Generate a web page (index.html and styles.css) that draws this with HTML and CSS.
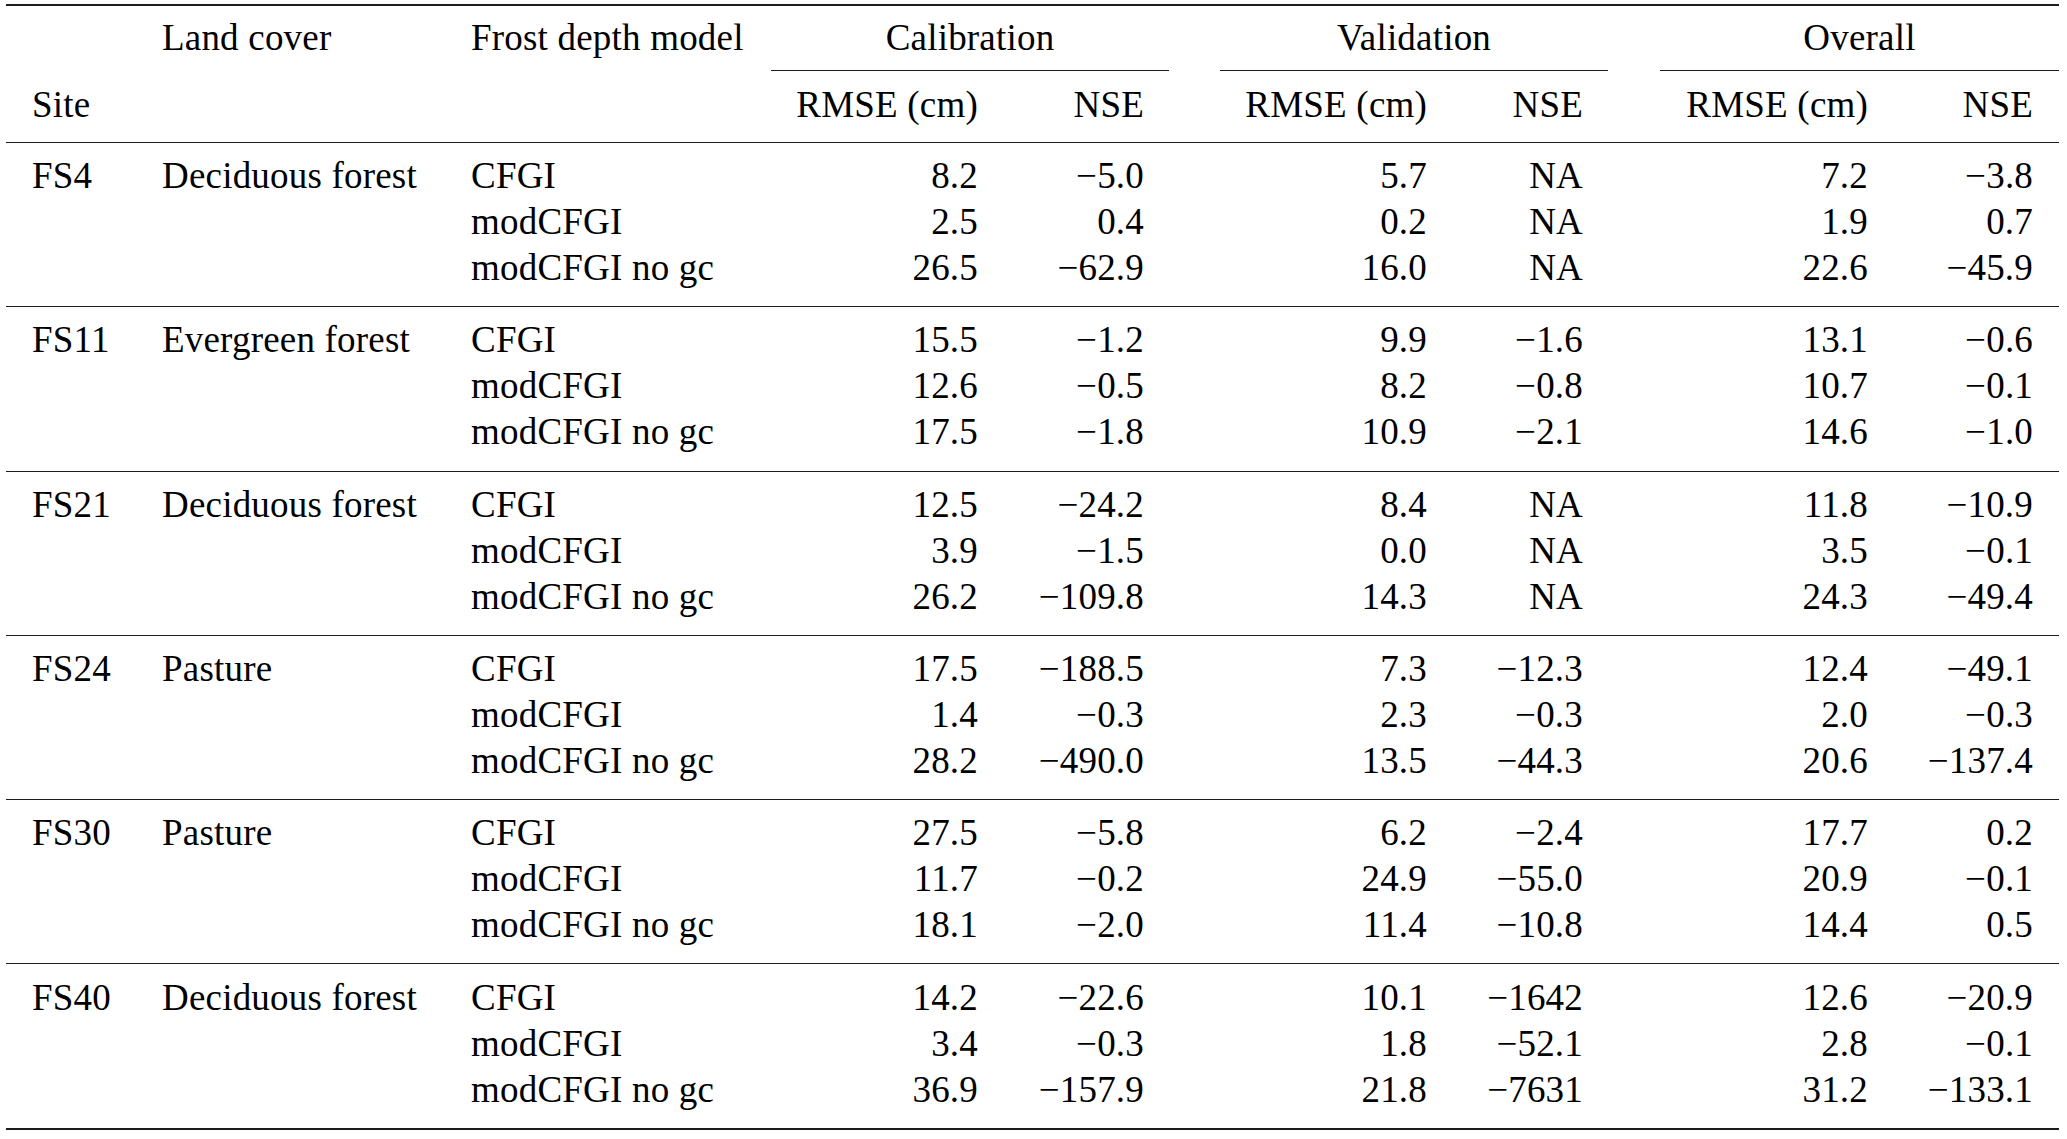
FILE: index.html
```html
<!DOCTYPE html>
<html lang="en">
<head>
<meta charset="utf-8">
<title>Frost depth model performance</title>
<link rel="stylesheet" href="styles.css">
</head>
<body>
<table class="results">
  <colgroup>
    <col class="c-site"><col class="c-land"><col class="c-model">
    <col class="c-cal-rmse"><col class="c-cal-nse">
    <col class="c-val-rmse"><col class="c-val-nse">
    <col class="c-all-rmse"><col class="c-all-nse">
  </colgroup>
  <thead>
    <tr class="head-top">
      <th class="txt"></th>
      <th class="txt">Land cover</th>
      <th class="txt">Frost depth model</th>
      <th class="span" colspan="2"><div class="spanner sp-cal">Calibration</div></th>
      <th class="span" colspan="2"><div class="spanner sp-val">Validation</div></th>
      <th class="span" colspan="2"><div class="spanner sp-all">Overall</div></th>
    </tr>
    <tr class="head-sub">
      <th class="txt">Site</th>
      <th class="txt"></th>
      <th class="txt"></th>
      <th class="num">RMSE (cm)</th>
      <th class="num">NSE</th>
      <th class="num">RMSE (cm)</th>
      <th class="num">NSE</th>
      <th class="num">RMSE (cm)</th>
      <th class="num">NSE</th>
    </tr>
  </thead>
  <tbody>
    <tr><td class="txt">FS4</td><td class="txt">Deciduous forest</td><td class="txt">CFGI</td><td class="num">8.2</td><td class="num">−5.0</td><td class="num">5.7</td><td class="num">NA</td><td class="num">7.2</td><td class="num">−3.8</td></tr>
    <tr><td class="txt"></td><td class="txt"></td><td class="txt">modCFGI</td><td class="num">2.5</td><td class="num">0.4</td><td class="num">0.2</td><td class="num">NA</td><td class="num">1.9</td><td class="num">0.7</td></tr>
    <tr><td class="txt"></td><td class="txt"></td><td class="txt">modCFGI no gc</td><td class="num">26.5</td><td class="num">−62.9</td><td class="num">16.0</td><td class="num">NA</td><td class="num">22.6</td><td class="num">−45.9</td></tr>
  </tbody>
  <tbody>
    <tr><td class="txt">FS11</td><td class="txt">Evergreen forest</td><td class="txt">CFGI</td><td class="num">15.5</td><td class="num">−1.2</td><td class="num">9.9</td><td class="num">−1.6</td><td class="num">13.1</td><td class="num">−0.6</td></tr>
    <tr><td class="txt"></td><td class="txt"></td><td class="txt">modCFGI</td><td class="num">12.6</td><td class="num">−0.5</td><td class="num">8.2</td><td class="num">−0.8</td><td class="num">10.7</td><td class="num">−0.1</td></tr>
    <tr><td class="txt"></td><td class="txt"></td><td class="txt">modCFGI no gc</td><td class="num">17.5</td><td class="num">−1.8</td><td class="num">10.9</td><td class="num">−2.1</td><td class="num">14.6</td><td class="num">−1.0</td></tr>
  </tbody>
  <tbody>
    <tr><td class="txt">FS21</td><td class="txt">Deciduous forest</td><td class="txt">CFGI</td><td class="num">12.5</td><td class="num">−24.2</td><td class="num">8.4</td><td class="num">NA</td><td class="num">11.8</td><td class="num">−10.9</td></tr>
    <tr><td class="txt"></td><td class="txt"></td><td class="txt">modCFGI</td><td class="num">3.9</td><td class="num">−1.5</td><td class="num">0.0</td><td class="num">NA</td><td class="num">3.5</td><td class="num">−0.1</td></tr>
    <tr><td class="txt"></td><td class="txt"></td><td class="txt">modCFGI no gc</td><td class="num">26.2</td><td class="num">−109.8</td><td class="num">14.3</td><td class="num">NA</td><td class="num">24.3</td><td class="num">−49.4</td></tr>
  </tbody>
  <tbody>
    <tr><td class="txt">FS24</td><td class="txt">Pasture</td><td class="txt">CFGI</td><td class="num">17.5</td><td class="num">−188.5</td><td class="num">7.3</td><td class="num">−12.3</td><td class="num">12.4</td><td class="num">−49.1</td></tr>
    <tr><td class="txt"></td><td class="txt"></td><td class="txt">modCFGI</td><td class="num">1.4</td><td class="num">−0.3</td><td class="num">2.3</td><td class="num">−0.3</td><td class="num">2.0</td><td class="num">−0.3</td></tr>
    <tr><td class="txt"></td><td class="txt"></td><td class="txt">modCFGI no gc</td><td class="num">28.2</td><td class="num">−490.0</td><td class="num">13.5</td><td class="num">−44.3</td><td class="num">20.6</td><td class="num">−137.4</td></tr>
  </tbody>
  <tbody>
    <tr><td class="txt">FS30</td><td class="txt">Pasture</td><td class="txt">CFGI</td><td class="num">27.5</td><td class="num">−5.8</td><td class="num">6.2</td><td class="num">−2.4</td><td class="num">17.7</td><td class="num">0.2</td></tr>
    <tr><td class="txt"></td><td class="txt"></td><td class="txt">modCFGI</td><td class="num">11.7</td><td class="num">−0.2</td><td class="num">24.9</td><td class="num">−55.0</td><td class="num">20.9</td><td class="num">−0.1</td></tr>
    <tr><td class="txt"></td><td class="txt"></td><td class="txt">modCFGI no gc</td><td class="num">18.1</td><td class="num">−2.0</td><td class="num">11.4</td><td class="num">−10.8</td><td class="num">14.4</td><td class="num">0.5</td></tr>
  </tbody>
  <tbody class="last">
    <tr><td class="txt">FS40</td><td class="txt">Deciduous forest</td><td class="txt">CFGI</td><td class="num">14.2</td><td class="num">−22.6</td><td class="num">10.1</td><td class="num">−1642</td><td class="num">12.6</td><td class="num">−20.9</td></tr>
    <tr><td class="txt"></td><td class="txt"></td><td class="txt">modCFGI</td><td class="num">3.4</td><td class="num">−0.3</td><td class="num">1.8</td><td class="num">−52.1</td><td class="num">2.8</td><td class="num">−0.1</td></tr>
    <tr><td class="txt"></td><td class="txt"></td><td class="txt">modCFGI no gc</td><td class="num">36.9</td><td class="num">−157.9</td><td class="num">21.8</td><td class="num">−7631</td><td class="num">31.2</td><td class="num">−133.1</td></tr>
  </tbody>
</table>
</body>
</html>
```

FILE: styles.css
```css
html, body {
  margin: 0;
  padding: 0;
  background: #ffffff;
}

body {
  padding: 4px 0 0 6px;
  font-family: "Liberation Serif", "Times New Roman", Times, serif;
  font-size: 37px;
  letter-spacing: 0.2px;
  color: #000000;
}

.results {
  table-layout: fixed;
  width: 2053px;
  border-collapse: separate;
  border-spacing: 0;
  line-height: 46px;
}

.c-site { width: 130px; }
.c-land { width: 309px; }
.c-model { width: 305px; }
.c-cal-rmse { width: 254px; }
.c-cal-nse { width: 166px; }
.c-val-rmse { width: 283px; }
.c-val-nse { width: 156px; }
.c-all-rmse { width: 285px; }
.c-all-nse { width: 165px; }

th, td {
  font-weight: normal;
  padding: 0;
  vertical-align: top;
  white-space: nowrap;
}

.txt {
  text-align: left;
  padding-left: 26px;
}

.num {
  text-align: right;
  padding-right: 26px;
}

/* header */
.head-top th {
  border-top: 2px solid #1c1c1c;
  padding-top: 8.6px;
}

.head-top th.span {
  padding-left: 0;
  padding-right: 0;
}

.spanner {
  text-align: center;
  padding-bottom: 9.4px;
  border-bottom: 1px solid #1c1c1c;
}

.sp-cal { margin: 0 1px 0 21px; }
.sp-val { margin: 0 1px 0 50px; }
.sp-all { margin: 0 0 0 51px; }

.head-sub th {
  padding-top: 10.6px;
  padding-bottom: 14.4px;
  border-bottom: 1px solid #1c1c1c;
}

/* body groups */
tbody tr:first-child td {
  padding-top: 10.2px;
}

tbody tr:last-child td {
  padding-bottom: 15.1px;
  border-bottom: 1px solid #1c1c1c;
}

tbody.last tr:last-child td {
  border-bottom: 2px solid #1c1c1c;
}
```
